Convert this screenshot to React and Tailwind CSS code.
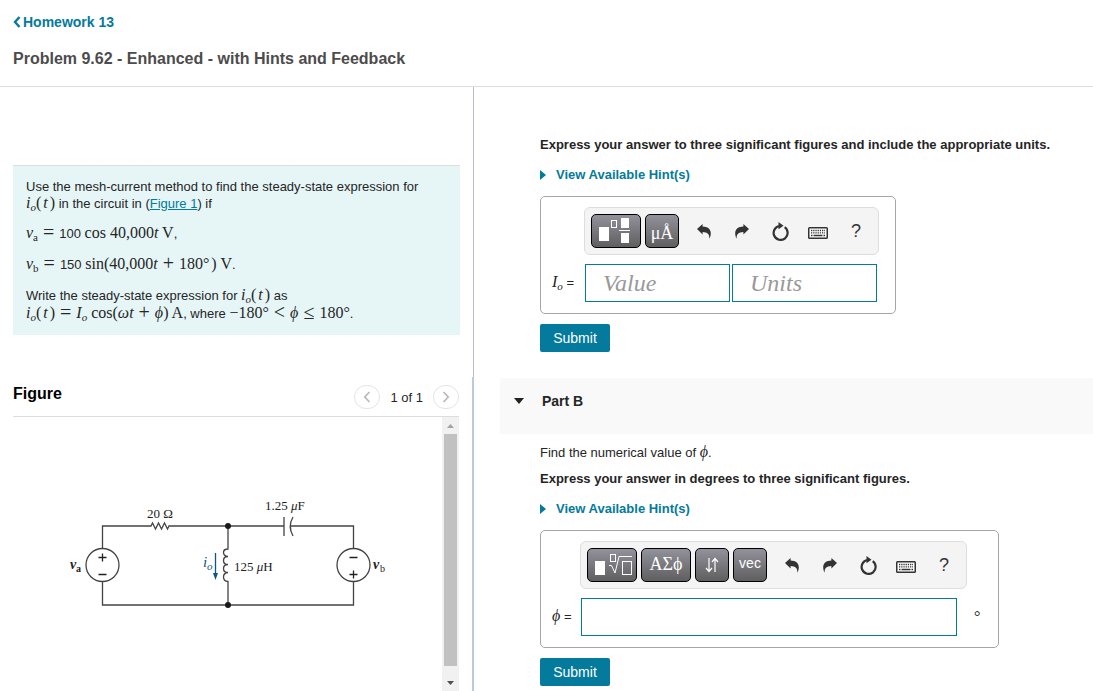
import clsx from "clsx";

/* ---------- math helpers ---------- */

const M = ({ children, className }) => (
  <span
    className={clsx(
      "font-['Liberation_Serif',serif] text-base leading-none whitespace-nowrap",
      className
    )}
  >
    {children}
  </span>
);

const Sub = ({ children }) => <sub className="text-[11px]">{children}</sub>;

const Op = ({ children }) => (
  <span className="mx-[5px] text-xl leading-[0] align-[-1px]">{children}</span>
);

const IoOfT = () => (
  <M>
    <i>i</i>
    <Sub>
      <i>o</i>
    </Sub>
    (<i className="mx-0.5">t</i>)
  </M>
);

/* ---------- icons ---------- */

const UndoIcon = ({ className }) => (
  <svg viewBox="0 0 14 15" className={clsx("w-[14px] h-[15px]", className)} aria-hidden="true">
    <path
      fill="#333"
      d="M0 5 5.600 0v2.500c5 .1 8.200 2.600 8.200 6.800 0 2-.5 3.800-1.400 5.400.1-4.500-1.800-6.500-6.800-6.600v2.400z"
    />
  </svg>
);

const ResetIcon = () => (
  <svg viewBox="0 0 18 19" className="w-[18px] h-[19px]" aria-hidden="true">
    <path
      fill="none"
      stroke="#333"
      strokeWidth="2.200"
      d="M13.700 5.200A7 7 0 1 1 8.500 4"
    />
    <path fill="#333" d="M7.500 0 12.500 3.800 7.500 7.200z" />
  </svg>
);

const KeyboardIcon = () => (
  <svg viewBox="0 0 20 12" className="w-5 h-3" aria-hidden="true">
    <rect x="0.750" y="0.750" width="18.500" height="10.500" rx="0.800" fill="#fff" stroke="#333" strokeWidth="1.500" />
    <path
      stroke="#333"
      strokeWidth="1.300"
      strokeDasharray="1.300 0.900"
      d="M3 3.500h14M3 5.800h14"
    />
    <path stroke="#333" strokeWidth="1.300" d="M3 8.500h1.500M5.500 8.500h9M15.500 8.500H17" />
  </svg>
);

const FractionIcon = () => (
  <svg viewBox="0 0 50 34" className="w-[50px] h-[34px] shrink-0" aria-hidden="true">
    <g fill="#fff">
      <rect x="8" y="13" width="10" height="14" />
      <rect x="30" y="4" width="8" height="10" />
      <rect x="28" y="16" width="11" height="1" />
      <rect x="30" y="19" width="8" height="10" />
    </g>
    <rect x="20.500" y="6.500" width="5" height="7" fill="none" stroke="#fff" />
  </svg>
);

const RootIcon = () => (
  <svg viewBox="0 0 50 34" className="w-[50px] h-[34px] shrink-0" aria-hidden="true">
    <rect x="8" y="13" width="10" height="14" fill="#fff" />
    <g fill="none" stroke="#fff">
      <rect x="23.500" y="6.500" width="5" height="7" />
      <path d="M22 17.500h2.500L28 25 32 8.500h13" />
      <rect x="35.500" y="13.500" width="9" height="13" />
    </g>
  </svg>
);

const Chevron = ({ flip }) => (
  <svg viewBox="0 0 8 12" className={clsx("w-2 h-3", flip && "-scale-x-100")} aria-hidden="true">
    <path d="M6.500 1 1.800 6l4.700 5" fill="none" stroke="#bbb" strokeWidth="1.800" />
  </svg>
);

/* ---------- answer widgets ---------- */

const ToolButton = ({ label, className, children }) => (
  <button
    type="button"
    aria-label={label}
    className={clsx(
      "h-[34px] flex items-center justify-center rounded-[5px] border border-black bg-linear-to-b from-[#93929c] to-[#5f5f60] text-white",
      className
    )}
  >
    {children}
  </button>
);

const actions = [
  { label: "Undo", icon: <UndoIcon /> },
  { label: "Redo", icon: <UndoIcon className="-scale-x-100" /> },
  { label: "Reset", icon: <ResetIcon /> },
  { label: "Keyboard shortcuts", icon: <KeyboardIcon />, low: true },
  { label: "Help", icon: "?" },
];

const Toolbar = ({ children, className }) => (
  <div
    className={clsx(
      "w-fit flex items-center rounded-md border border-[#ddd] bg-[#f4f4f4] py-1.5 pl-1.5 pr-[3px]",
      className
    )}
  >
    <div className="flex gap-1">{children}</div>
    <div className="flex ml-1.5">
      {actions.map((a) => (
        <button
          key={a.label}
          type="button"
          aria-label={a.label}
          className={clsx(
            "w-[38px] h-[34px] flex items-center justify-center text-lg text-[#333]",
            a.low && "pt-1"
          )}
        >
          {a.icon}
        </button>
      ))}
    </div>
  </div>
);

const AnswerBox = ({ className, children }) => (
  <div
    className={clsx(
      "w-fit mt-[11px] pt-2.5 pb-[11px] rounded-[5px] border border-[#a6a6a6]",
      className
    )}
  >
    {children}
  </div>
);

const inputStyle =
  "h-[38px] border border-[#047a9c] bg-white px-[17px] font-['Liberation_Serif',serif] text-2xl text-black placeholder:italic placeholder:text-[#999] outline-none";

const Hints = () => (
  <button
    type="button"
    className="mt-2.5 flex items-center gap-2.5 leading-5 font-bold text-[#047a9c]"
  >
    <svg viewBox="0 0 6 10" className="w-1.5 h-2.5" aria-hidden="true">
      <path d="M0 0 6 5 0 10z" fill="currentColor" />
    </svg>
    View Available Hint(s)
  </button>
);

const Submit = () => (
  <button
    type="submit"
    className="mt-2.5 block w-[70px] h-7 rounded-[2px] bg-[#047a9c] text-sm text-white"
  >
    Submit
  </button>
);

/* ---------- left column ---------- */

const Problem = () => (
  <section className="pt-[78px] pb-[42px] pl-[13px] pr-[13px] border-r border-[#b8bfca]">
    <div className="flex flex-col gap-[13px] border-t border-[#d9dfdf] bg-[#e6f6f7] px-[13px] py-3 leading-[18px] text-[#252525]">
      <p className="leading-[17px]">
        Use the mesh-current method to find the steady-state expression for{" "}
        <IoOfT /> in the circuit in (
        <a href="#figure" className="underline text-[#047a9c]">
          Figure 1
        </a>
        ) if
      </p>
      <p>
        <M>
          <i>v</i>
          <Sub>a</Sub>
          <Op>=</Op>
        </M>
        100{" "}
        <M>
          cos 40,000<i>t</i> V
        </M>
        ,
      </p>
      <p>
        <M>
          <i>v</i>
          <Sub>b</Sub>
          <Op>=</Op>
        </M>
        150{" "}
        <M>
          sin(40,000<i>t</i>
          <Op>+</Op>180°
          <span className="ml-0.5">)</span> V
        </M>
        .
      </p>
      <p>
        Write the steady-state expression for <IoOfT /> as
        <br />
        <IoOfT />
        <M>
          <Op>=</Op>
          <i>I</i>
          <Sub>
            <i>o</i>
          </Sub>{" "}
          cos(<i>ωt</i>
          <Op>+</Op>
          <i>ϕ</i>) A
        </M>
        , where{" "}
        <M>
          −180°
          <Op>&lt;</Op>
          <i>ϕ</i>
          <Op>≤</Op>180°
        </M>
        .
      </p>
    </div>
  </section>
);

const Circuit = () => (
  <svg
    viewBox="68 496 322 116"
    className="w-[322px] h-[116px] shrink-0"
    role="img"
    aria-label="Circuit diagram"
  >
    <g fill="none" stroke="#444" strokeWidth="1.300">
      <path d="M102.500 549V526H151l1.500-3 3 6 3-6 3 6 3-6 3 6 1.500-3H284" />
      <path d="M290 526H353.500V549M353.500 581v24H102.500V581" />
      <path d="M284 517v19M293 517q-5.500 9.500 0 19" />
      <path d="M228 526v23c-6 0-6 7 0 7.500-6 0-6 8 0 8-6 0-6 8 0 8-6 .5-6 8.500 0 9V605" />
      <circle cx="102.500" cy="565" r="16.500" />
      <circle cx="353.500" cy="565" r="16.500" />
      <path stroke="#222" d="M98.500 557.500h8M102.500 553.500v8M98.500 574.500h8M349.500 557.500h8M349.500 574.500h8M353.500 570.500v8" />
    </g>
    <circle cx="228" cy="526" r="3" fill="#1a1a1a" />
    <circle cx="228" cy="605" r="3" fill="#1a1a1a" />
    <path d="M215.500 553v22" stroke="#0a5a80" strokeWidth="1.300" />
    <path d="M213 573h5l-2.500 7z" fill="#0a5a80" />
    <g fill="#222" fontFamily="'Liberation Serif', serif" fontSize="13">
      <text x="147" y="518">20 Ω</text>
      <text x="265" y="510">
        1.25 <tspan fontStyle="italic">μ</tspan>F
      </text>
      <text x="234" y="571">
        125 <tspan fontStyle="italic">μ</tspan>H
      </text>
      <text x="70" y="569" fontSize="14" fontStyle="italic" fontWeight="bold">v</text>
      <text x="76" y="572" fontSize="10" fontWeight="bold">a</text>
      <text x="373" y="569" fontSize="14" fontStyle="italic" fontWeight="bold">v</text>
      <text x="380" y="572" fontSize="10">b</text>
      <g fill="#0a5a80" fontStyle="italic">
        <text x="203" y="567" fontSize="15">i</text>
        <text x="207" y="570" fontSize="11">o</text>
      </g>
    </g>
  </svg>
);

const ScrollArrow = ({ down }) => (
  <div className="h-[17px] w-full flex items-center justify-center">
    <svg viewBox="0 0 7 4" className={clsx("w-[7px] h-1", down && "-scale-y-100")} aria-hidden="true">
      <path d="M0 4 3.500 0 7 4z" fill={down ? "#505050" : "#a3a3a3"} />
    </svg>
  </div>
);

const pagerButton =
  "w-[26px] h-6 flex items-center justify-center rounded-full border border-[#e4e4e4] bg-white";

const Figure = () => (
  <section
    id="figure"
    className="flex-1 min-h-0 flex flex-col pl-[13px] pr-[13px] border-r-2 border-[#b9cbdd]"
  >
    <div className="h-10 shrink-0 flex items-center justify-between border-b border-[#ddd]">
      <h2 className="pb-1.5 text-base font-bold text-black">Figure</h2>
      <div className="flex items-center gap-2.5">
        <button type="button" aria-label="Previous figure" className={pagerButton}>
          <Chevron />
        </button>
        <span className="pt-0.5">1 of 1</span>
        <button type="button" aria-label="Next figure" className={pagerButton}>
          <Chevron flip />
        </button>
      </div>
    </div>
    <div className="flex-1 min-h-0 flex">
      <div className="flex-1 min-w-0 overflow-hidden pt-[79px] pl-[55px]">
        <Circuit />
      </div>
      <div className="w-[17px] flex flex-col items-center bg-[#f1f1f1]">
        <ScrollArrow />
        <div className="w-[13px] flex-1 mb-2 bg-[#c1c1c1]" />
        <ScrollArrow down />
      </div>
    </div>
  </section>
);

/* ---------- right column ---------- */

const PartA = () => (
  <form className="pt-12 pl-[66px]" onSubmit={(e) => e.preventDefault()}>
    <p className="leading-5 font-bold">
      Express your answer to three significant figures and include the
      appropriate units.
    </p>
    <Hints />
    <AnswerBox className="pr-4">
      <Toolbar className="ml-[43px]">
        <ToolButton label="Templates" className="w-[50px]">
          <FractionIcon />
        </ToolButton>
        <ToolButton className="w-[34px] pt-1">
          <span className="font-['Liberation_Serif',serif] text-lg">μÅ</span>
        </ToolButton>
      </Toolbar>
      <div className="mt-[9px] flex items-center">
        <label htmlFor="io-value" className="w-11 pl-[11px]">
          <M>
            <i>I</i>
            <Sub>
              <i>o</i>
            </Sub>
          </M>{" "}
          =
        </label>
        <input id="io-value" placeholder="Value" className={clsx(inputStyle, "w-[145px]")} />
        <input
          aria-label="Units"
          placeholder="Units"
          className={clsx(inputStyle, "w-[145px] ml-0.5")}
        />
      </div>
    </AnswerBox>
    <Submit />
  </form>
);

const PartB = () => (
  <form className="mt-[26px]" onSubmit={(e) => e.preventDefault()}>
    <h2 className="ml-[26px] h-14 bg-[#f9f9f9] pl-3.5 pt-[13px]">
      <button type="button" className="flex items-center gap-[18px] text-sm leading-5 font-bold">
        <svg viewBox="0 0 10 6" className="w-2.5 h-1.5" aria-hidden="true">
          <path d="M0 0h10L5 6z" fill="#222" />
        </svg>
        Part B
      </button>
    </h2>
    <div className="pl-[66px]">
      <p className="mt-[9px] leading-5">
        Find the numerical value of{" "}
        <M>
          <i>ϕ</i>
        </M>
        .
      </p>
      <p className="mt-1.5 leading-5 font-bold">
        Express your answer in degrees to three significant figures.
      </p>
      <Hints />
      <AnswerBox className="pr-[18px]">
        <Toolbar className="ml-[39px]">
          <ToolButton label="Templates" className="w-[50px]">
            <RootIcon />
          </ToolButton>
          <ToolButton className="w-[50px] pb-0.5">
            <span className="font-['Liberation_Serif',serif] text-lg">ΑΣϕ</span>
          </ToolButton>
          <ToolButton label="Arrows" className="w-[34px]">
            <svg viewBox="0 0 14 16" className="w-3.5 h-4" aria-hidden="true">
              <path
                d="M4 1v13M1 11l3 3.500L7 11M10 15V2M7 5l3-3.500L13 5"
                fill="none"
                stroke="#fff"
                strokeWidth="1.200"
              />
            </svg>
          </ToolButton>
          <ToolButton className="w-[34px] pb-1">
            <span className="text-sm">vec</span>
          </ToolButton>
        </Toolbar>
        <div className="mt-[9px] flex items-center">
          <label htmlFor="phi" className="w-10 pl-[11px]">
            <M>
              <i>ϕ</i>
            </M>{" "}
            =
          </label>
          <input id="phi" className={clsx(inputStyle, "w-[376px]")} />
          <M className="ml-[17px]">°</M>
        </div>
      </AnswerBox>
      <Submit />
    </div>
  </form>
);

const App = () => (
  <div className="h-screen flex flex-col overflow-hidden bg-white font-['Liberation_Sans',Arial,sans-serif] text-[13px] text-[#252525]">
    <header className="shrink-0 px-[13px] pt-3 pb-[17px] border-b border-[#ddd]">
      <a
        href="#assignment"
        className="w-fit flex items-center gap-0.5 text-sm leading-5 font-bold text-[#047a9c]"
      >
        <svg viewBox="0 0 8 12" className="w-2 h-3" aria-hidden="true">
          <path d="M6.500 1 2 6l4.500 5" fill="none" stroke="currentColor" strokeWidth="2.400" />
        </svg>
        Homework 13
      </a>
      <h1 className="mt-[17px] text-base leading-5 font-bold text-[#4c4c4c]">
        Problem 9.62 - Enhanced - with Hints and Feedback
      </h1>
    </header>
    <div className="flex-1 min-h-0 grid grid-cols-[474fr_619fr] grid-rows-[minmax(0,1fr)]">
      <div className="min-w-0 flex flex-col">
        <Problem />
        <Figure />
      </div>
      <main className="min-w-0 overflow-hidden">
        <PartA />
        <PartB />
      </main>
    </div>
  </div>
);

export default App;
